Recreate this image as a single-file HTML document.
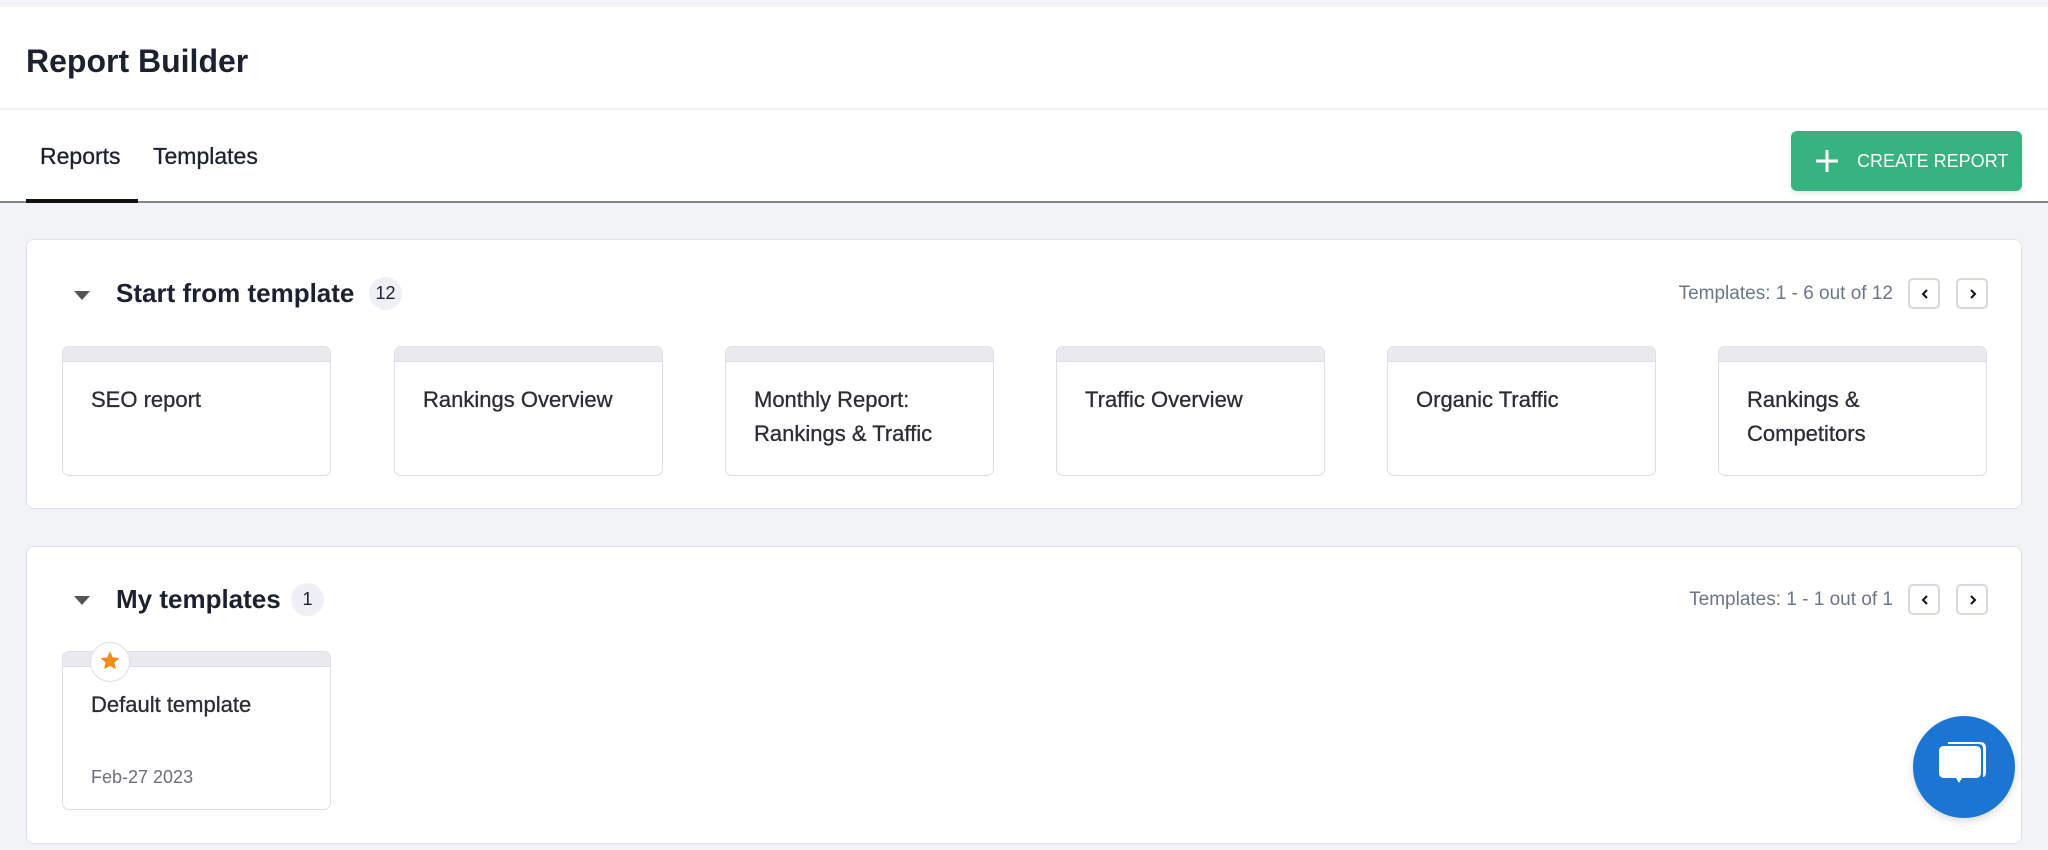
<!DOCTYPE html>
<html><head><meta charset="utf-8"><style>
*{box-sizing:border-box;margin:0;padding:0}
body{width:2048px;height:850px;overflow:hidden;background:#f2f3f7;font-family:"Liberation Sans",sans-serif;color:#1c2130;position:relative}
.abs{position:absolute}
.top{left:0;top:0;width:2048px;height:7px;background:#f2f3f7}
.hdr{left:0;top:7px;width:2048px;height:103px;background:#fff;border-bottom:2px solid #f0f1f4}
.tabs{left:0;top:110px;width:2048px;height:93px;background:#fff;border-bottom:2px solid #7d8796}
.card{background:#fff;border:1px solid #dfe2ea;border-radius:8px}
.tc{position:absolute;width:269px;height:130px;background:#fff;border:1.5px solid #dcdfe8;border-radius:7px;overflow:hidden}
.tc .band{height:15px;background:#e9eaee;border-bottom:1.5px solid #dcdfe8}
.tc .t{position:absolute;left:28px;top:36px;font-size:22px;line-height:34px;color:#2a2d33;-webkit-text-stroke:0.3px #2a2d33}
.badge{position:absolute;height:33px;border-radius:17px;background:#eef0f5;font-size:18px;line-height:33px;text-align:center}
.pg{position:absolute;width:32px;height:31px;border:2px solid #d6d9e3;border-radius:5px;background:#fff}
.pg svg{position:absolute;left:9px;top:8px}
.cnt{position:absolute;font-size:19px;color:#6b7686;text-align:right;width:400px}
.tri{position:absolute;width:0;height:0;border-left:8px solid transparent;border-right:8px solid transparent;border-top:9px solid #555}
h2{position:absolute;font-size:26px;font-weight:bold;color:#1c2130}
</style></head><body>
<div class="abs top"></div>
<div class="abs hdr"><div class="abs" style="left:26px;top:36px;font-size:32px;font-weight:bold;color:#1c2130">Report Builder</div></div>
<div class="abs tabs">
<div class="abs" style="left:40px;top:33px;font-size:23px;color:#1c2130;-webkit-text-stroke:0.3px #1c2130">Reports</div>
<div class="abs" style="left:153px;top:33px;font-size:23px;color:#1c2130;-webkit-text-stroke:0.3px #1c2130">Templates</div>
<div class="abs" style="left:26px;top:89px;width:112px;height:4px;background:#111"></div>
<div class="abs" style="left:1791px;top:21px;width:231px;height:60px;background:#38b27f;border-radius:6px;box-shadow:0 3px 6px rgba(0,0,0,.08)">
<svg class="abs" style="left:24px;top:18px" width="24" height="24" viewBox="0 0 24 24"><path d="M12 1v22M1 12h22" stroke="#fff" stroke-width="3"/></svg>
<div class="abs" style="left:66px;top:20px;font-size:18px;color:#fff;white-space:nowrap">CREATE REPORT</div></div>
</div>

<div class="abs card" style="left:26px;top:239px;width:1996px;height:270px">
<div class="tri" style="left:47px;top:51px"></div>
<h2 style="left:89px;top:38px">Start from template</h2>
<div class="badge" style="left:342px;top:37px;width:33px">12</div>
<div class="cnt" style="left:1466px;top:43px">Templates: 1 - 6 out of 12</div>
<div class="pg" style="left:1881px;top:38px"><svg width="12" height="12" viewBox="0 0 12 12"><path d="M8 2L4 6l4 4" stroke="#111" stroke-width="2" fill="none"/></svg></div>
<div class="pg" style="left:1929px;top:38px"><svg width="12" height="12" viewBox="0 0 12 12"><path d="M4 2l4 4-4 4" stroke="#111" stroke-width="2" fill="none"/></svg></div>
<div class="tc" style="left:35px;top:106px"><div class="band"></div><div class="t">SEO report</div></div>
<div class="tc" style="left:367px;top:106px"><div class="band"></div><div class="t">Rankings Overview</div></div>
<div class="tc" style="left:698px;top:106px"><div class="band"></div><div class="t">Monthly Report:<br>Rankings &amp; Traffic</div></div>
<div class="tc" style="left:1029px;top:106px"><div class="band"></div><div class="t">Traffic Overview</div></div>
<div class="tc" style="left:1360px;top:106px"><div class="band"></div><div class="t">Organic Traffic</div></div>
<div class="tc" style="left:1691px;top:106px"><div class="band"></div><div class="t">Rankings &amp;<br>Competitors</div></div>
</div>

<div class="abs card" style="left:26px;top:546px;width:1996px;height:298px">
<div class="tri" style="left:47px;top:49px"></div>
<h2 style="left:89px;top:37px">My templates</h2>
<div class="badge" style="left:264px;top:36px;width:33px">1</div>
<div class="cnt" style="left:1466px;top:42px">Templates: 1 - 1 out of 1</div>
<div class="pg" style="left:1881px;top:37px"><svg width="12" height="12" viewBox="0 0 12 12"><path d="M8 2L4 6l4 4" stroke="#111" stroke-width="2" fill="none"/></svg></div>
<div class="pg" style="left:1929px;top:37px"><svg width="12" height="12" viewBox="0 0 12 12"><path d="M4 2l4 4-4 4" stroke="#111" stroke-width="2" fill="none"/></svg></div>
<div class="tc" style="left:35px;top:104px;height:159px"><div class="band"></div>
<div class="t" style="top:36px">Default template</div>
<div class="abs" style="left:28px;top:115px;font-size:18px;color:#6b6f78">Feb-27 2023</div></div>
<div class="abs" style="left:63px;top:95px;width:40px;height:40px;border-radius:50%;background:#fff;border:1.5px solid #dcdfe8">
<svg class="abs" style="left:8px;top:7px" width="22" height="22" viewBox="0 0 24 24"><path d="M12 1.5l3.1 6.6 7.2.8-5.4 4.9 1.5 7.1L12 17.3l-6.4 3.6 1.5-7.1L1.7 8.9l7.2-.8z" fill="#f28c1d"/></svg></div>
</div>

<div class="abs" style="left:1913px;top:716px;width:102px;height:102px;border-radius:50%;background:#1a76d2;box-shadow:0 3px 8px rgba(0,0,0,.15)">
<svg class="abs" style="left:23px;top:24px" width="56" height="56" viewBox="0 0 56 56"><path d="M12 2h32c4 0 6 2 6 6v24c0 3-1 5-3 5V9c0-3-1-5-5-5H12z" fill="#fff"/><path d="M8 6h32c3 0 5 2 5 5v22c0 3-2 5-5 5H26l-3 5-3-5H8c-3 0-5-2-5-5V11c0-3 2-5 5-5z" fill="#fff"/></svg></div>
</body></html>
